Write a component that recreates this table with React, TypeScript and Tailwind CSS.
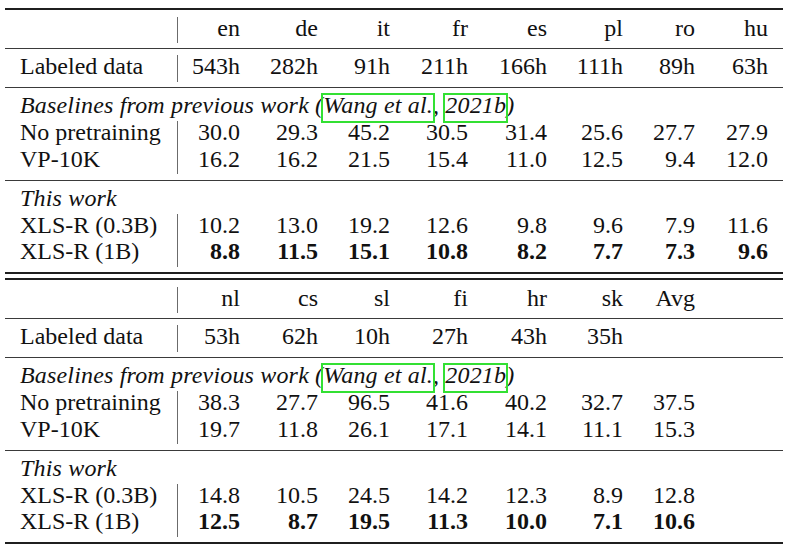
import React from 'react';
import clsx from 'clsx';

// right-aligned data columns; widths put the right edges at 240, 318, 390 ... 768
const colW = ['w-[62px]', 'w-[78px]', 'w-[72px]', 'w-[78px]', 'w-[79px]', 'w-[76px]', 'w-[72px]', 'w-[73px]'];

type RowProps = {
  label?: React.ReactNode;
  cells: string[];
  bold?: boolean;
  h?: string;
};

const Row: React.FC<RowProps> = ({ label, cells, bold, h = 'h-[26.5px]' }) => (
  <div className={clsx('flex leading-[22px]', h)}>
    <div className="w-[173px] shrink-0 pl-[15px] border-r border-[#6b6b6b]">{label}</div>
    {colW.map((w, i) => (
      <div key={i} className={clsx(w, 'shrink-0 text-right', bold && 'font-bold')}>
        {cells[i] ?? ''}
      </div>
    ))}
  </div>
);

const Section: React.FC<{ children: React.ReactNode; h?: string }> = ({ children, h = 'h-[26.5px]' }) => (
  <div className={clsx('pl-[15px] leading-[22px] italic whitespace-nowrap tracking-[0.17px]', h)}>{children}</div>
);

const Cite: React.FC<{ children: React.ReactNode }> = ({ children }) => (
  <span className="relative">
    {children}
    <span className="absolute -left-[2px] -right-[2px] top-[1px] -bottom-[5px] border-2 border-[#33e033]" />
  </span>
);

const ThinRule = () => <div className="mt-[5px] mb-[6px] h-px bg-[#3a3a3a]" />;

type TableData = {
  langs: string[];
  hours: string[];
  noPre: string[];
  vp: string[];
  small: string[];
  big: string[];
};

const Table: React.FC<{ d: TableData }> = ({ d }) => (
  <div className="flex flex-col">
    <div className="mb-[7px] h-[2px] bg-[#1f1f1f]" />
    <Row cells={d.langs} h="h-[26px]" />
    <ThinRule />
    <Row label="Labeled data" cells={d.hours} h="h-[27px]" />
    <ThinRule />
    <Section h="h-[27px]">
      Baselines from previous work (<Cite>Wang et al.</Cite>, <Cite>2021b</Cite>)
    </Section>
    <Row label="No pretraining" cells={d.noPre} />
    <Row label="VP-10K" cells={d.vp} />
    <div className="mt-[6px] mb-[6px] h-px bg-[#3a3a3a]" />
    <Section>This work</Section>
    <Row label="XLS-R (0.3B)" cells={d.small} />
    <Row label="XLS-R (1B)" cells={d.big} bold />
    <div className="mt-[5.5px] h-[2px] bg-[#1f1f1f]" />
  </div>
);

const top: TableData = {
  langs: ['en', 'de', 'it', 'fr', 'es', 'pl', 'ro', 'hu'],
  hours: ['543h', '282h', '91h', '211h', '166h', '111h', '89h', '63h'],
  noPre: ['30.0', '29.3', '45.2', '30.5', '31.4', '25.6', '27.7', '27.9'],
  vp: ['16.2', '16.2', '21.5', '15.4', '11.0', '12.5', '9.4', '12.0'],
  small: ['10.2', '13.0', '19.2', '12.6', '9.8', '9.6', '7.9', '11.6'],
  big: ['8.8', '11.5', '15.1', '10.8', '8.2', '7.7', '7.3', '9.6'],
};

const bottom: TableData = {
  langs: ['nl', 'cs', 'sl', 'fi', 'hr', 'sk', 'Avg'],
  hours: ['53h', '62h', '10h', '27h', '43h', '35h'],
  noPre: ['38.3', '27.7', '96.5', '41.6', '40.2', '32.7', '37.5'],
  vp: ['19.7', '11.8', '26.1', '17.1', '14.1', '11.1', '15.3'],
  small: ['14.8', '10.5', '24.5', '14.2', '12.3', '8.9', '12.8'],
  big: ['12.5', '8.7', '19.5', '11.3', '10.0', '7.1', '10.6'],
};

const App: React.FC = () => {
  return (
    <div className="w-[799px] h-[551px] bg-white text-[#111] text-[24px] font-['Liberation_Serif','Times_New_Roman',serif]">
      <div className="ml-[5px] w-[778px] pt-[8px] flex flex-col gap-[4px]">
        <Table d={top} />
        <Table d={bottom} />
      </div>
    </div>
  );
};

export default App;
